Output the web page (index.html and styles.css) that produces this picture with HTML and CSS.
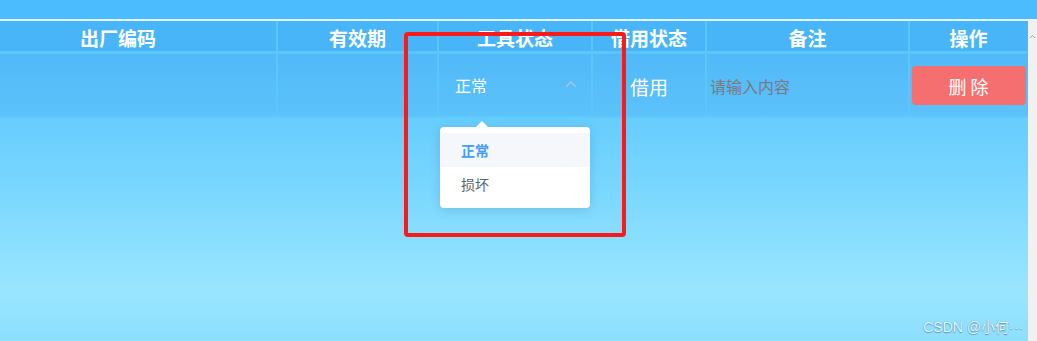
FILE: index.html
```html
<!DOCTYPE html>
<html lang="zh">
<head>
<meta charset="utf-8">
<link rel="stylesheet" href="styles.css">
</head>
<body>
<div class="topbar"></div>
<div class="content">
  <div class="main">
    <div class="table">
      <div class="th first">出厂编码</div>
      <div class="th">有效期</div>
      <div class="th">工具状态</div>
      <div class="th">借用状态</div>
      <div class="th">备注</div>
      <div class="th">操作</div>
      <div class="td"></div>
      <div class="td"></div>
      <div class="td select"><span>正常</span><svg class="arrow" width="12" height="8" viewBox="0 0 12 8"><path d="M1.5 6.5 L6 2 L10.5 6.5" fill="none" stroke="#a9c8e2" stroke-width="1.3"/></svg></div>
      <div class="td borrow">借用</div>
      <div class="td note"><span class="placeholder">请输入内容</span></div>
      <div class="td op"><button class="del">删 除</button></div>
    </div>
    <div class="watermark">CSDN @小何···</div>
  </div>
  <div class="scrollbar"><svg width="9" height="8" viewBox="0 0 9 8"><path d="M2 5 L4.5 2.5 L7 5" fill="none" stroke="#a0a0a0" stroke-width="1"/></svg></div>
</div>
<div class="dropdown">
  <div class="caret"></div>
  <div class="item active">正常</div>
  <div class="item">损坏</div>
</div>
<div class="redbox"></div>
</body>
</html>
```
FILE: styles.css
```css
html, body {
  margin: 0;
  padding: 0;
  width: 1037px;
  height: 341px;
  overflow: hidden;
  font-family: "Noto Sans CJK SC", "Noto Sans", sans-serif;
}
body { position: relative; background: #f1f1f1; }
.topbar {
  height: 19px;
  background: #4bbcfe;
}
.content {
  display: flex;
  height: 322px;
}
.main {
  width: 1028px;
  position: relative;
  border-top: 2px solid #e6f5fe;
  background: linear-gradient(to bottom, #4ab5f8 0px, #58bff9 95px, #66cdfe 96px, #7ad7ff 170px, #99e6ff 269px, #8ddffe 320px);
}
.scrollbar {
  width: 9px;
  background: #f1f1f1;
  display: flex;
  justify-content: center;
  padding-top: 14px;
  box-sizing: border-box;
}
.table {
  display: grid;
  grid-template-columns: 276px 159px 152px 112px 201px 117px;
  grid-template-rows: 30px 62px;
  column-gap: 2px;
  row-gap: 3px;
  background: #5bc5fc;
  border-bottom: 2px solid #5fc9fd;
  width: 1027px;
}
.th {
  background: #48b5f8;
  color: #fff;
  font-weight: bold;
  font-size: 19px;
  display: flex;
  align-items: center;
  justify-content: center;
  line-height: 1;
  padding-top: 2px;
}
.th.first { padding-right: 40px; }
.td {
  background: linear-gradient(to bottom, #51b9f8, #5bc2fa);
  display: flex;
  align-items: center;
}
.select {
  color: #fff;
  font-size: 16px;
  padding: 0 14px 0 16px;
  justify-content: space-between;
}
.select .arrow { margin-top: -2px; }
.borrow {
  color: #fff;
  font-size: 19px;
  justify-content: center;
  padding-top: 2px;
}
.note { padding-left: 3px; }
.placeholder {
  color: #7a7a7a;
  font-size: 16px;
  margin-top: 2px;
}
.op { justify-content: center; }
.del {
  width: 114px;
  height: 39px;
  margin-top: 1px;
  border: none;
  border-radius: 4px;
  background: #f56f70;
  color: #fff;
  font-family: "Noto Sans CJK SC", sans-serif;
  font-size: 18px;
  padding: 0;
}
.watermark {
  position: absolute;
  right: 5px;
  bottom: 5px;
  font-size: 14px;
  color: #e8f6ff;
  text-shadow: 0 0 1px #4b8fb0, 0 1px 1px rgba(40,90,120,0.5);
  font-family: "Liberation Sans", "Noto Sans CJK SC", sans-serif;
}
.dropdown {
  position: absolute;
  left: 440px;
  top: 127px;
  width: 150px;
  padding: 6px 0 7px;
  background: #fff;
  border-radius: 4px;
  box-shadow: 0 2px 12px rgba(0,0,0,0.12);
  box-sizing: border-box;
}
.caret {
  position: absolute;
  top: -6px;
  left: 36px;
  width: 0;
  height: 0;
  border-left: 6px solid transparent;
  border-right: 6px solid transparent;
  border-bottom: 6px solid #fff;
}
.item {
  height: 34px;
  line-height: 34px;
  padding-left: 21px;
  font-size: 14px;
  color: #606266;
}
.item.active {
  background: #f5f7fa;
  color: #409eff;
  font-weight: bold;
}
.redbox {
  position: absolute;
  left: 404px;
  top: 32px;
  width: 222px;
  height: 205px;
  border: 4px solid #fa1a1a;
  border-radius: 4px;
  box-sizing: border-box;
}
```
